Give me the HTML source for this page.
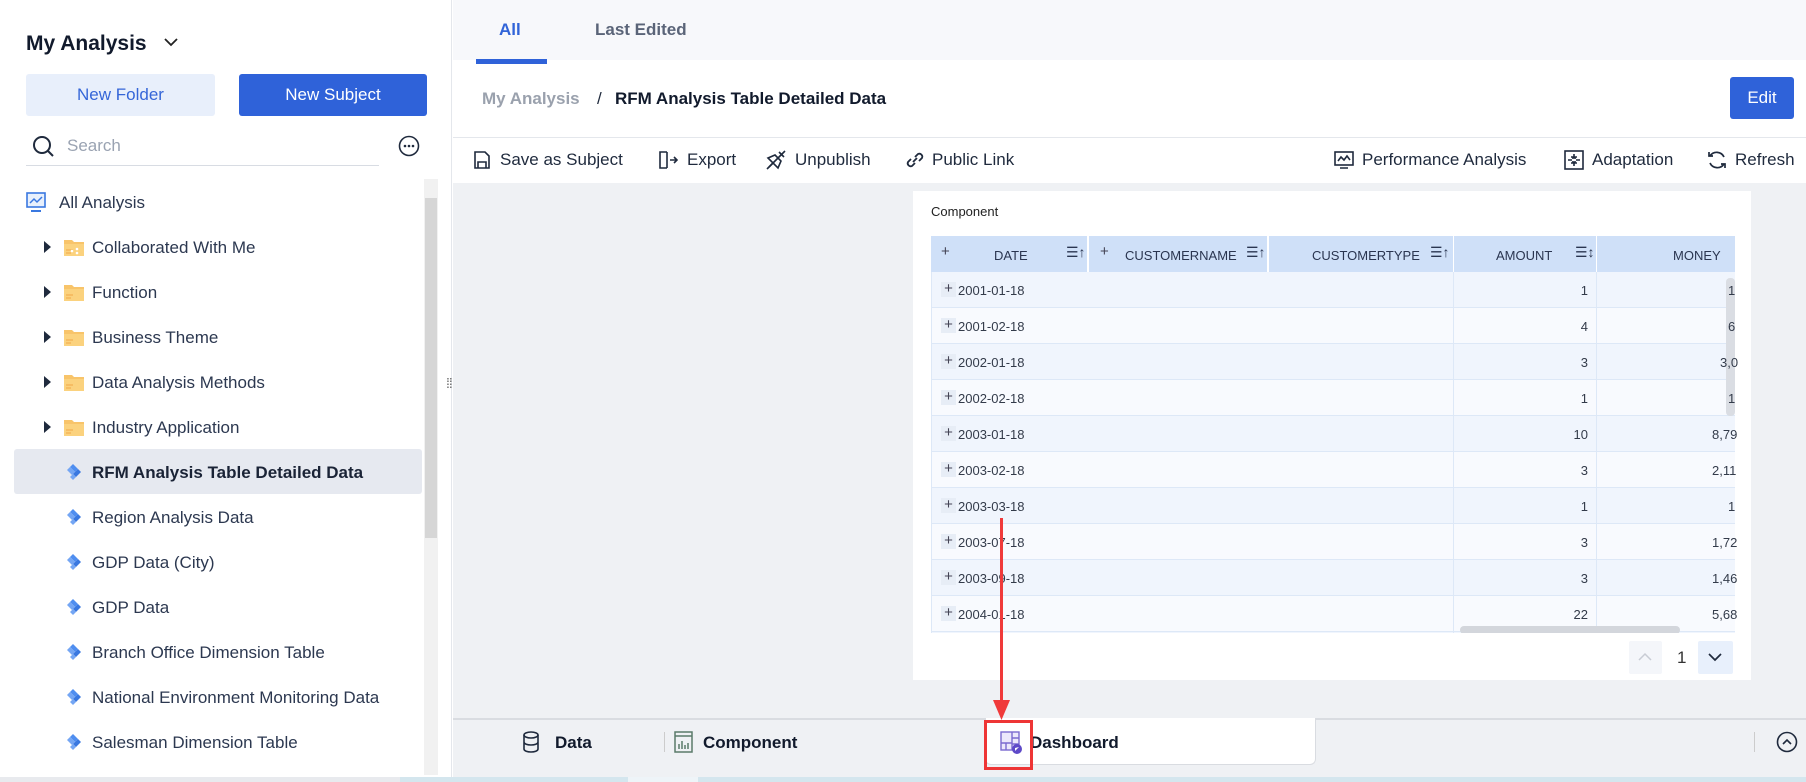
<!DOCTYPE html>
<html><head><meta charset="utf-8"><style>
*{box-sizing:border-box;margin:0;padding:0}
body{width:1806px;height:782px;position:relative;overflow:hidden;background:#fff;font-family:"Liberation Sans",Arial,sans-serif;color:#1f2a3d}
.a{position:absolute}
.t{position:absolute;white-space:nowrap;line-height:1}
.li{font-size:17px;color:#2c3850}
.tb{font-size:17px;color:#1f2a3d}
.cell{position:absolute;font-size:13px;color:#333b4a;white-space:nowrap;line-height:1}
.plus{position:absolute;width:15px;height:15px;background:#e7edf6;color:#445;font-size:15px;line-height:14px;text-align:center}
</style></head><body>
<div class="a" style="left:0;top:0;width:452px;height:778px;background:#fff;border-right:1px solid #e4e7ec"></div>
<div class="t" style="left:26px;top:33px;font-size:21px;font-weight:bold;color:#111a2c">My Analysis</div>
<svg class="a" style="left:163px;top:36px" width="16" height="12"><path d="M2 3l6 6 6-6" stroke="#222" stroke-width="1.8" fill="none"/></svg>
<div class="a" style="left:26px;top:74px;width:189px;height:42px;background:#e8effb;border-radius:3px;color:#3566d8;font-size:17px;text-align:center;line-height:42px">New Folder</div>
<div class="a" style="left:239px;top:74px;width:188px;height:42px;background:#2f62d9;border-radius:3px;color:#fff;font-size:17px;text-align:center;line-height:42px">New Subject</div>
<svg class="a" style="left:32px;top:135px" width="24" height="24"><circle cx="10" cy="10" r="8" stroke="#1f2a3d" stroke-width="2" fill="none"/><path d="M16 16l5 5" stroke="#1f2a3d" stroke-width="2"/></svg>
<div class="t" style="left:67px;top:137px;font-size:17px;color:#9aa3b2">Search</div>
<div class="a" style="left:26px;top:165px;width:353px;height:1px;background:#d8dce3"></div>
<svg class="a" style="left:398px;top:135px" width="22" height="22"><circle cx="11" cy="11" r="9.5" stroke="#1f2a3d" stroke-width="1.6" fill="none"/><circle cx="7" cy="11" r="1.3" fill="#1f2a3d"/><circle cx="11" cy="11" r="1.3" fill="#1f2a3d"/><circle cx="15" cy="11" r="1.3" fill="#1f2a3d"/></svg>
<svg class="a" style="left:26px;top:192px" width="20" height="21"><rect x="1" y="1" width="18" height="14" stroke="#3a78e0" stroke-width="1.6" fill="#e8f0fc"/><path d="M4 11l4-4 3 3 5-5" stroke="#3a78e0" stroke-width="1.5" fill="none"/><path d="M5 19h10" stroke="#3a78e0" stroke-width="2"/></svg>
<div class="t li" style="left:59px;top:194px">All Analysis</div>

<svg width="0" height="0" style="position:absolute"><defs>
<g id="fold"><path d="M0 3h8l2 2h10v14H0z" fill="#f8c46a"/><rect x="0" y="7" width="20" height="12" fill="#fbd27e"/><path d="M2 13h7M2 16h5" stroke="#f0a848" stroke-width="1"/></g>
<g id="dia" fill="#4f8ef0"><path d="M9 1l5 5-3 3-5-5z"/><path d="M3 7l3-3 5 5-3 3z" fill="#74a6f4"/><path d="M9 11l5-5 3 3-5 5z" fill="#3a78e0"/><path d="M6 14l3-3 3 3-3 3z" fill="#74a6f4"/></g>
</defs></svg>
<div class="a" style="left:44px;top:241px;width:0;height:0;border-left:7px solid #1f2a3d;border-top:6px solid transparent;border-bottom:6px solid transparent"></div>
<svg class="a" style="left:64px;top:237px" width="20" height="20"><use href="#fold"/><circle cx="13" cy="12" r="1.3" fill="#fff"/><circle cx="8" cy="14" r="1.3" fill="#fff"/><circle cx="13" cy="16" r="1.3" fill="#fff"/></svg>
<div class="t li" style="left:92px;top:239px">Collaborated With Me</div>
<div class="a" style="left:44px;top:286px;border-left:7px solid #1f2a3d;border-top:6px solid transparent;border-bottom:6px solid transparent"></div>
<svg class="a" style="left:64px;top:282px" width="20" height="20"><use href="#fold"/></svg>
<div class="t li" style="left:92px;top:284px">Function</div>
<div class="a" style="left:44px;top:331px;border-left:7px solid #1f2a3d;border-top:6px solid transparent;border-bottom:6px solid transparent"></div>
<svg class="a" style="left:64px;top:327px" width="20" height="20"><use href="#fold"/></svg>
<div class="t li" style="left:92px;top:329px">Business Theme</div>
<div class="a" style="left:44px;top:376px;border-left:7px solid #1f2a3d;border-top:6px solid transparent;border-bottom:6px solid transparent"></div>
<svg class="a" style="left:64px;top:372px" width="20" height="20"><use href="#fold"/></svg>
<div class="t li" style="left:92px;top:374px">Data Analysis Methods</div>
<div class="a" style="left:44px;top:421px;border-left:7px solid #1f2a3d;border-top:6px solid transparent;border-bottom:6px solid transparent"></div>
<svg class="a" style="left:64px;top:417px" width="20" height="20"><use href="#fold"/></svg>
<div class="t li" style="left:92px;top:419px">Industry Application</div>

<div class="a" style="left:14px;top:449px;width:408px;height:45px;background:#e6e9f0;border-radius:3px"></div>
<svg class="a" style="left:64px;top:463px" width="20" height="20"><use href="#dia"/></svg>
<div class="t li" style="left:92px;top:464px;font-weight:bold;color:#1a2336">RFM Analysis Table Detailed Data</div>
<svg class="a" style="left:64px;top:508px" width="20" height="20"><use href="#dia"/></svg>
<div class="t li" style="left:92px;top:509px">Region Analysis Data</div>
<svg class="a" style="left:64px;top:553px" width="20" height="20"><use href="#dia"/></svg>
<div class="t li" style="left:92px;top:554px">GDP Data (City)</div>
<svg class="a" style="left:64px;top:598px" width="20" height="20"><use href="#dia"/></svg>
<div class="t li" style="left:92px;top:599px">GDP Data</div>
<svg class="a" style="left:64px;top:643px" width="20" height="20"><use href="#dia"/></svg>
<div class="t li" style="left:92px;top:644px">Branch Office Dimension Table</div>
<svg class="a" style="left:64px;top:688px" width="20" height="20"><use href="#dia"/></svg>
<div class="t li" style="left:92px;top:689px">National Environment Monitoring Data</div>
<svg class="a" style="left:64px;top:733px" width="20" height="20"><use href="#dia"/></svg>
<div class="t li" style="left:92px;top:734px">Salesman Dimension Table</div>
<div class="a" style="left:424px;top:179px;width:14px;height:596px;background:#f1f1f1"></div>
<div class="a" style="left:425px;top:198px;width:12px;height:340px;background:#d6d6d6"></div>

<div class="a" style="left:453px;top:0;width:1353px;height:60px;background:#f7f8fb"></div>
<div class="t" style="left:499px;top:21px;font-size:17px;font-weight:bold;color:#3164d8">All</div>
<div class="a" style="left:476px;top:59px;width:71px;height:5px;background:#2f62d9"></div>
<div class="t" style="left:595px;top:21px;font-size:17px;font-weight:bold;color:#5a6478">Last Edited</div>
<div class="t" style="left:482px;top:90px;font-size:17px;font-weight:bold;color:#9aa1ad">My Analysis</div>
<div class="t" style="left:597px;top:90px;font-size:17px;color:#1f2a3d">/</div>
<div class="t" style="left:615px;top:90px;font-size:17px;font-weight:bold;color:#111a2c">RFM Analysis Table Detailed Data</div>
<div class="a" style="left:1730px;top:77px;width:64px;height:42px;background:#2f62d9;border-radius:3px;color:#fff;font-size:17px;text-align:center;line-height:42px">Edit</div>
<div class="a" style="left:453px;top:137px;width:1353px;height:1px;background:#e4e7ec"></div>
<svg class="a" style="left:472px;top:150px" width="20" height="20" fill="none" stroke="#1f2a3d" stroke-width="1.6"><path d="M3 2h10l4 4v12H3z"/><path d="M6 18v-6h8v6"/></svg>
<div class="t tb" style="left:500px;top:151px">Save as Subject</div>
<svg class="a" style="left:658px;top:150px" width="20" height="20" fill="none" stroke="#1f2a3d" stroke-width="1.6"><path d="M9 2H2v16h7"/><path d="M9 2v16"/><path d="M12 10h7M16 7l3 3-3 3"/></svg>
<div class="t tb" style="left:687px;top:151px">Export</div>
<svg class="a" style="left:765px;top:149px" width="22" height="22" fill="none" stroke="#1f2a3d" stroke-width="1.6"><path d="M4 18l4-4M3 9l7-3 6 6-3 7zM14 3l5 5"/><path d="M2 20L20 2"/></svg>
<div class="t tb" style="left:795px;top:151px">Unpublish</div>
<svg class="a" style="left:904px;top:149px" width="22" height="22" fill="none" stroke="#1f2a3d" stroke-width="1.8"><path d="M9 13l4-4M7 10l-3 3a3 3 0 004 4l3-3M15 12l3-3a3 3 0 00-4-4l-3 3"/></svg>
<div class="t tb" style="left:932px;top:151px">Public Link</div>
<svg class="a" style="left:1334px;top:150px" width="20" height="20" fill="none" stroke="#1f2a3d" stroke-width="1.6"><rect x="1" y="2" width="18" height="13"/><path d="M4 11l3-4 3 3 3-4 3 4M6 18h8"/></svg>
<div class="t tb" style="left:1362px;top:151px">Performance Analysis</div>
<svg class="a" style="left:1564px;top:150px" width="20" height="20" fill="none" stroke="#1f2a3d" stroke-width="1.6"><rect x="1" y="1" width="18" height="18"/><path d="M10 4v4M10 12v4M4 10h4M12 10h4M7 7h2v2M13 7h-2v2M7 13h2v-2M13 13h-2v-2"/></svg>
<div class="t tb" style="left:1592px;top:151px">Adaptation</div>
<svg class="a" style="left:1706px;top:149px" width="22" height="22" fill="none" stroke="#1f2a3d" stroke-width="1.7"><path d="M18 8a8 8 0 00-14-1M4 14a8 8 0 0014 1"/><path d="M3 3v4h4M19 19v-4h-4"/></svg>
<div class="t tb" style="left:1735px;top:151px">Refresh</div>

<div class="a" style="left:453px;top:183px;width:1353px;height:536px;background:#eff1f4"></div>
<div class="t" style="left:446px;top:380px;font-size:14px;color:#666;letter-spacing:-1px;line-height:6px">⁞⁞</div>
<div class="a" style="left:913px;top:191px;width:838px;height:489px;background:#fff"></div>
<div class="t" style="left:931px;top:205px;font-size:13px;color:#222">Component</div>
<div class="a" style="left:931px;top:236px;width:804px;height:36px;background:#cfe0f8"></div>
<div class="a" style="left:1087px;top:236px;width:2px;height:36px;background:#fff"></div>
<div class="a" style="left:1267px;top:236px;width:2px;height:36px;background:#fff"></div>
<div class="a" style="left:1453px;top:236px;width:1px;height:36px;background:#fff"></div>
<div class="a" style="left:1596px;top:236px;width:1px;height:36px;background:#fff"></div>
<div class="t" style="left:941px;top:244px;font-size:15px;color:#445">+</div>
<div class="t" style="left:994px;top:249px;font-size:13px;color:#2a3550">DATE</div>
<div class="t" style="left:1066px;top:245px;font-size:14px;color:#2a3550">☰↑</div>
<div class="t" style="left:1100px;top:244px;font-size:15px;color:#445">+</div>
<div class="t" style="left:1125px;top:249px;font-size:13px;color:#2a3550">CUSTOMERNAME</div>
<div class="t" style="left:1246px;top:245px;font-size:14px;color:#2a3550">☰↑</div>
<div class="t" style="left:1312px;top:249px;font-size:13px;color:#2a3550">CUSTOMERTYPE</div>
<div class="t" style="left:1430px;top:245px;font-size:14px;color:#2a3550">☰↑</div>
<div class="t" style="left:1496px;top:249px;font-size:13px;color:#2a3550">AMOUNT</div>
<div class="t" style="left:1575px;top:245px;font-size:14px;color:#2a3550">☰↕</div>
<div class="t" style="left:1673px;top:249px;font-size:13px;color:#2a3550">MONEY</div>
<div class="a" style="left:931px;top:272px;width:804px;height:361px;overflow:hidden">
<div style="position:absolute;left:0;top:0;width:804px">
<div style="height:36px;background:#f0f5fd;border-bottom:1px solid #dde8f7"></div>
<div style="height:36px;background:#f8fafe;border-bottom:1px solid #dde8f7"></div>
<div style="height:36px;background:#f0f5fd;border-bottom:1px solid #dde8f7"></div>
<div style="height:36px;background:#f8fafe;border-bottom:1px solid #dde8f7"></div>
<div style="height:36px;background:#f0f5fd;border-bottom:1px solid #dde8f7"></div>
<div style="height:36px;background:#f8fafe;border-bottom:1px solid #dde8f7"></div>
<div style="height:36px;background:#f0f5fd;border-bottom:1px solid #dde8f7"></div>
<div style="height:36px;background:#f8fafe;border-bottom:1px solid #dde8f7"></div>
<div style="height:36px;background:#f0f5fd;border-bottom:1px solid #dde8f7"></div>
<div style="height:36px;background:#f8fafe;border-bottom:1px solid #dde8f7"></div>
<div style="height:36px;background:#f0f5fd"></div>
</div>
<div class="a" style="left:0;top:0;width:1px;height:361px;background:#dde8f7"></div>
<div class="a" style="left:522px;top:0;width:1px;height:361px;background:#dde8f7"></div>
<div class="a" style="left:665px;top:0;width:1px;height:361px;background:#dde8f7"></div>
<div class="a" style="left:795px;top:6px;width:9px;height:138px;background:#dadde3;border-radius:4px"></div>
<div class="a" style="left:529px;top:354px;width:220px;height:8px;background:#d3d6dc;border-radius:4px"></div>
</div>
<div class="a" style="left:931px;top:272px;width:804px;height:361px;font-size:13px;color:#333b4a">
<div class="plus" style="left:10px;top:10px">+</div><div class="cell" style="left:27px;top:12px">2001-01-18</div><div class="cell" style="right:147px;top:12px">1</div><div class="cell" style="left:797px;top:12px">1</div>
<div class="plus" style="left:10px;top:46px">+</div><div class="cell" style="left:27px;top:48px">2001-02-18</div><div class="cell" style="right:147px;top:48px">4</div><div class="cell" style="left:797px;top:48px">6</div>
<div class="plus" style="left:10px;top:82px">+</div><div class="cell" style="left:27px;top:84px">2002-01-18</div><div class="cell" style="right:147px;top:84px">3</div><div class="cell" style="left:789px;top:84px">3,0</div>
<div class="plus" style="left:10px;top:118px">+</div><div class="cell" style="left:27px;top:120px">2002-02-18</div><div class="cell" style="right:147px;top:120px">1</div><div class="cell" style="left:797px;top:120px">1</div>
<div class="plus" style="left:10px;top:154px">+</div><div class="cell" style="left:27px;top:156px">2003-01-18</div><div class="cell" style="right:147px;top:156px">10</div><div class="cell" style="left:781px;top:156px">8,79</div>
<div class="plus" style="left:10px;top:190px">+</div><div class="cell" style="left:27px;top:192px">2003-02-18</div><div class="cell" style="right:147px;top:192px">3</div><div class="cell" style="left:781px;top:192px">2,11</div>
<div class="plus" style="left:10px;top:226px">+</div><div class="cell" style="left:27px;top:228px">2003-03-18</div><div class="cell" style="right:147px;top:228px">1</div><div class="cell" style="left:797px;top:228px">1</div>
<div class="plus" style="left:10px;top:262px">+</div><div class="cell" style="left:27px;top:264px">2003-07-18</div><div class="cell" style="right:147px;top:264px">3</div><div class="cell" style="left:781px;top:264px">1,72</div>
<div class="plus" style="left:10px;top:298px">+</div><div class="cell" style="left:27px;top:300px">2003-09-18</div><div class="cell" style="right:147px;top:300px">3</div><div class="cell" style="left:781px;top:300px">1,46</div>
<div class="plus" style="left:10px;top:334px">+</div><div class="cell" style="left:27px;top:336px">2004-01-18</div><div class="cell" style="right:147px;top:336px">22</div><div class="cell" style="left:781px;top:336px">5,68</div>
</div>
<div class="a" style="left:1629px;top:641px;width:33px;height:33px;background:#f4f6fa;border-radius:2px"></div>
<svg class="a" style="left:1637px;top:650px" width="16" height="14"><path d="M2 10l6-6 6 6" stroke="#c8ccd4" stroke-width="1.5" fill="none"/></svg>
<div class="t" style="left:1677px;top:649px;font-size:17px;color:#333">1</div>
<div class="a" style="left:1698px;top:641px;width:35px;height:33px;background:#e8f0fc;border-radius:2px"></div>
<svg class="a" style="left:1707px;top:650px" width="16" height="14"><path d="M2 4l6 6 6-6" stroke="#1f2a3d" stroke-width="1.7" fill="none"/></svg>

<div class="a" style="left:453px;top:718px;width:1353px;height:60px;background:#eff1f4;border-top:2px solid #d9dce1"></div>
<div class="a" style="left:985px;top:718px;width:331px;height:47px;background:#fff;border:1px solid #d9dce1;border-top:none;border-radius:0 0 6px 6px"></div>
<svg class="a" style="left:522px;top:731px" width="18" height="22" fill="none" stroke="#1f2a3d" stroke-width="1.6"><ellipse cx="9" cy="4" rx="7" ry="3"/><path d="M2 4v14c0 4 14 4 14 0V4M2 11c0 4 14 4 14 0"/></svg>
<div class="t" style="left:555px;top:734px;font-size:17px;font-weight:bold;color:#111a2c">Data</div>
<div class="a" style="left:664px;top:732px;width:1px;height:20px;background:#ccc"></div>
<svg class="a" style="left:674px;top:731px" width="20" height="22" fill="none" stroke="#5a7a6a" stroke-width="1.5"><rect x="1" y="1" width="17" height="20"/><path d="M1 5h17M5 18v-5M8 18v-8M11 18v-4M14 18v-6"/></svg>
<div class="t" style="left:703px;top:734px;font-size:17px;font-weight:bold;color:#111a2c">Component</div>
<svg class="a" style="left:1000px;top:731px" width="24" height="24"><rect x="1" y="1" width="18" height="18" fill="#ece8fb" stroke="#7b6ad0" stroke-width="1.4"/><path d="M12 1v18M1 12h11M12 7h7M12 13h7M6 12v7" stroke="#7b6ad0" stroke-width="1.4"/><circle cx="17" cy="18" r="5" fill="#5e49c8"/><path d="M15 20l4-4-4 1z" fill="#fff"/></svg>
<div class="t" style="left:1030px;top:734px;font-size:17px;font-weight:bold;color:#111a2c">Dashboard</div>
<div class="a" style="left:984px;top:720px;width:49px;height:50px;border:3px solid #ee3535"></div>
<div class="a" style="left:1754px;top:732px;width:1px;height:20px;background:#ccc"></div>
<svg class="a" style="left:1776px;top:731px" width="22" height="22" fill="none" stroke="#1f2a3d" stroke-width="1.6"><circle cx="11" cy="11" r="9.5"/><path d="M7 13l4-4 4 4"/></svg>
<div class="a" style="left:1000px;top:518px;width:3px;height:187px;background:#f03a3a"></div>
<svg class="a" style="left:993px;top:700px" width="17" height="20"><path d="M0 0h17l-8.5 20z" fill="#f03a3a"/></svg>
<div class="a" style="left:0;top:777px;width:1806px;height:5px;background:#d4e6ee"></div>
<div class="a" style="left:0;top:777px;width:400px;height:5px;background:#e8eaee"></div>
<div class="a" style="left:628px;top:777px;width:70px;height:5px;background:#eef4f8"></div>
</body></html>
